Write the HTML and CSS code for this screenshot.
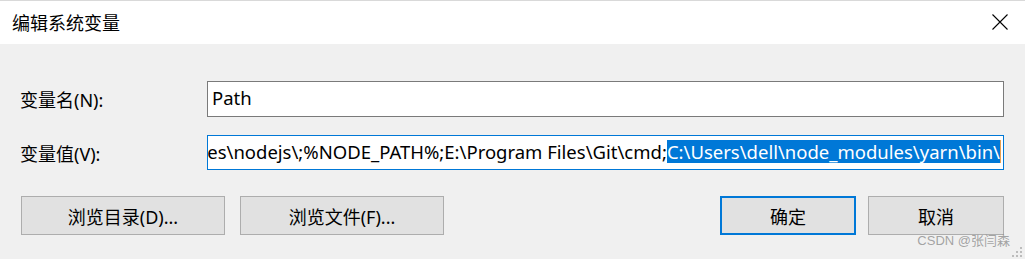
FILE: index.html
```html
<!DOCTYPE html>
<html>

<head>
  <meta charset="UTF-8">
  <title>编辑系统变量</title>
  <link rel="stylesheet" href="styles.css">
</head>

<body>
  <div class="dialog">
    <div class="titlebar">
      <span class="title">编辑系统变量</span>
      <svg class="close" width="16" height="16" viewBox="0 0 16 16">
        <path d="M0.5 0.5 L15.5 15.5 M15.5 0.5 L0.5 15.5" stroke="#000" stroke-width="1.1" fill="none" />
      </svg>
    </div>

    <div class="content">
      <div class="field">
        <label>变量名(N):</label>
        <div class="input">Path</div>
      </div>
      <div class="field">
        <label>变量值(V):</label>
        <div class="input focused">
          <span class="value">les\nodejs\;%NODE_PATH%;E:\Program Files\Git\cmd;<span class="selected">C:\Users\dell\node_modules\yarn\bin\</span></span>
        </div>
      </div>

      <div class="buttons">
        <div class="left-buttons">
          <button class="btn wide">浏览目录(D)...</button>
          <button class="btn wide">浏览文件(F)...</button>
        </div>
        <div class="right-buttons">
          <button class="btn default">确定</button>
          <button class="btn">取消</button>
        </div>
      </div>
    </div>

    <div class="watermark">CSDN @张闫森</div>
    <svg class="grip" width="12" height="12" viewBox="0 0 12 12">
      <rect x="9" y="1" width="2" height="2" fill="#bcbcbc" />
      <rect x="5" y="5" width="2" height="2" fill="#bcbcbc" />
      <rect x="9" y="5" width="2" height="2" fill="#bcbcbc" />
      <rect x="1" y="9" width="2" height="2" fill="#bcbcbc" />
      <rect x="5" y="9" width="2" height="2" fill="#bcbcbc" />
      <rect x="9" y="9" width="2" height="2" fill="#bcbcbc" />
    </svg>
  </div>
</body>

</html>
```

FILE: styles.css
```css
body {
  margin: 0;
  font-family: "Noto Sans", "Noto Sans CJK SC", sans-serif;
  background-color: #f0f0f0;
}

.dialog {
  position: relative;
  width: 1025px;
  height: 259px;
  overflow: hidden;
  border-top: 1px solid #d9d9d9;
  box-sizing: border-box;
}

.titlebar {
  height: 43px;
  background-color: #fff;
  display: flex;
  align-items: center;
  justify-content: space-between;
  padding: 0 17px 0 12px;
}

.title {
  font-size: 18px;
  color: #000;
  margin-top: -1px;
}

.close {
  margin-top: -1px;
}

.content {
  padding: 37px 21px 0 20px;
}

.field {
  display: grid;
  grid-template-columns: 187px minmax(0, 1fr);
  align-items: center;
  margin-bottom: 18px;
}

.field label {
  font-size: 18px;
  color: #000;
}

.input {
  height: 34px;
  border: 1px solid #7a7a7a;
  background-color: #fff;
  font-size: 18.5px;
  line-height: 32px;
  padding: 0 4px;
  white-space: nowrap;
  overflow: hidden;
}

.input.focused {
  height: 33px;
  border-color: #0078d7;
  display: flex;
  justify-content: flex-end;
  padding-right: 3px;
}

.selected {
  background-color: #0078d7;
  color: #fff;
  display: inline-block;
  line-height: 23px;
  box-shadow: 1px 0 0 #e8a050;
}

.buttons {
  display: flex;
  justify-content: space-between;
  margin-top: 26px;
}

.left-buttons,
.right-buttons {
  display: flex;
}

.left-buttons {
  gap: 15px;
  margin-left: 1px;
}

.right-buttons {
  gap: 12px;
}

.btn {
  height: 39px;
  width: 136px;
  background-color: #e1e1e1;
  border: 1px solid #adadad;
  font-family: "Noto Sans", "Noto Sans CJK SC", sans-serif;
  font-size: 18px;
  color: #000;
  padding: 0;
}

.btn.wide {
  width: 204px;
}

.btn.default {
  border: 2px solid #0078d7;
}

.watermark {
  position: absolute;
  right: 15px;
  bottom: 10px;
  font-family: "Liberation Sans", "Noto Sans CJK SC", sans-serif;
  font-size: 13px;
  color: rgba(128, 128, 128, 0.7);
}

.grip {
  position: absolute;
  right: 2px;
  bottom: 1px;
}
```
